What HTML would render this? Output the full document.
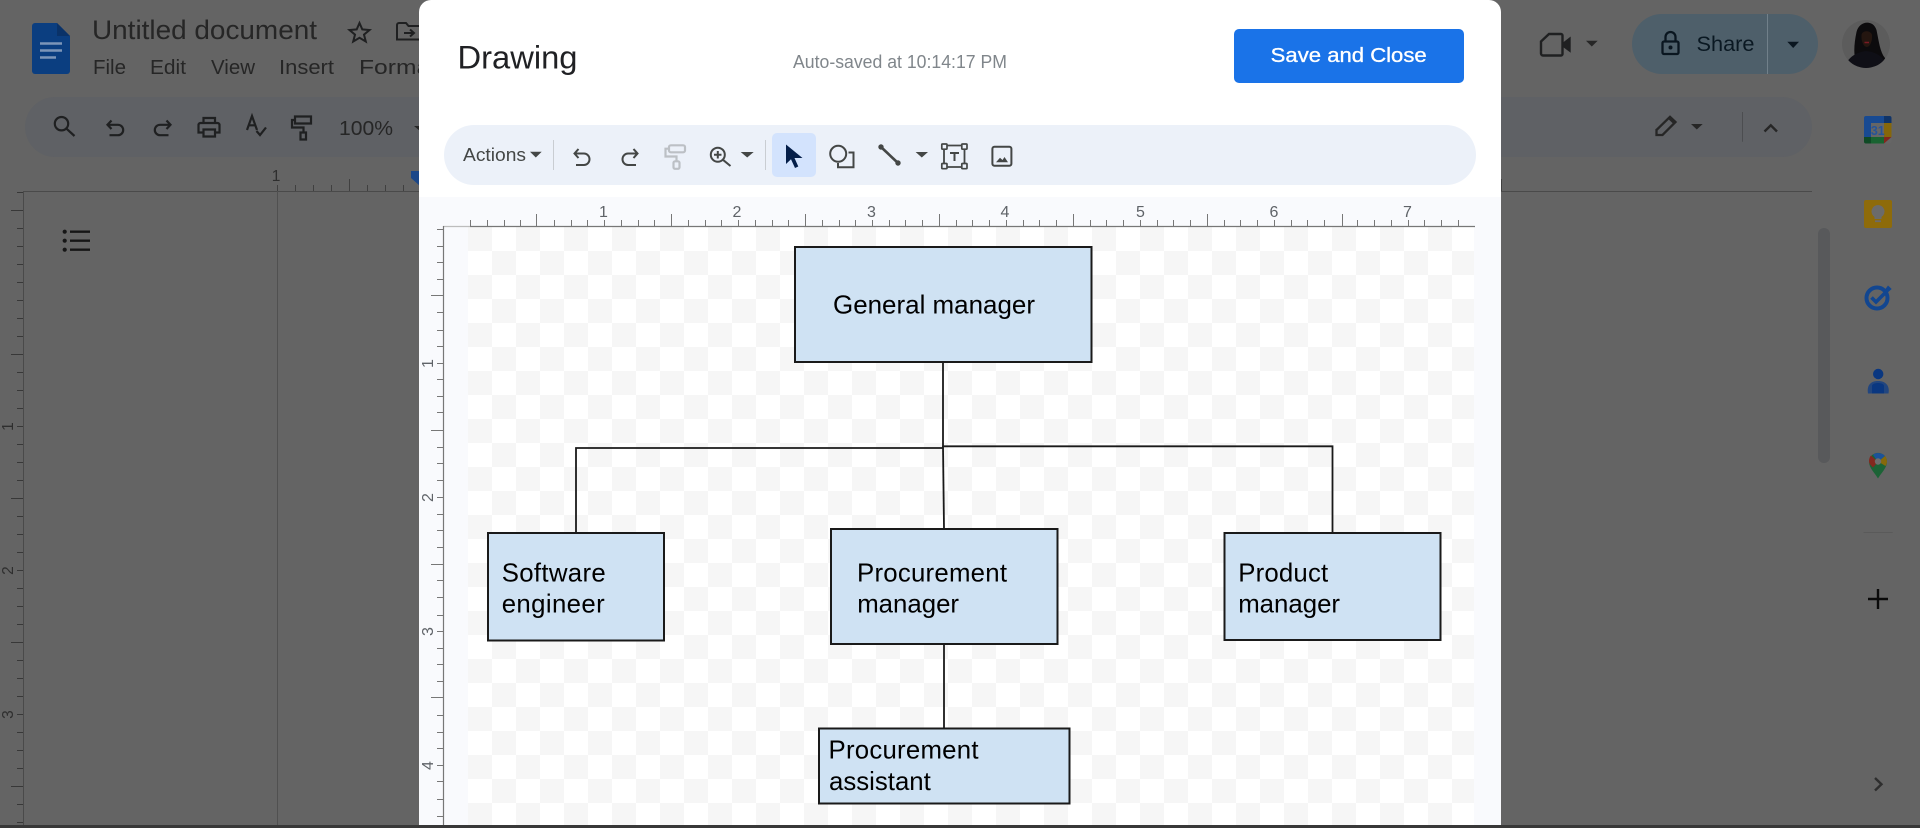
<!DOCTYPE html>
<html><head><meta charset="utf-8"><title>Drawing</title>
<style>
html,body{margin:0;padding:0;width:1920px;height:828px;overflow:hidden;background:#646464}
svg{display:block}
text{font-family:"Liberation Sans",Arial,sans-serif}
</style></head><body>
<svg width="1920" height="828" viewBox="0 0 1920 828" xmlns="http://www.w3.org/2000/svg">
<defs>
<pattern id="chk" patternUnits="userSpaceOnUse" x="468" y="227" width="48" height="48">
<rect width="48" height="48" fill="#fff"/><rect width="24" height="24" fill="#f6f6f6"/><rect x="24" y="24" width="24" height="24" fill="#f6f6f6"/>
</pattern>
<clipPath id="av"><circle cx="1866" cy="44" r="24"/></clipPath>
</defs>

<!-- background document -->
<rect width="1920" height="828" fill="#646464"/>
<path d="M35 23H57L70 36V71a3 3 0 0 1-3 3H35a3 3 0 0 1-3-3V26a3 3 0 0 1 3-3Z" fill="#0b3e80"/>
<path d="M57 23L70 36H57Z" fill="#0a3268"/>
<path d="M40 43.500H62M40 50.500H62M40 57.500H56" stroke="#7d95b8" stroke-width="2.400"/>
<text x="92" y="39" font-size="27" fill="#262626" textLength="225" lengthAdjust="spacingAndGlyphs">Untitled document</text>
<path d="M359.500 23L362.300 29.400 369.500 30 364 34.600 365.800 41.500 359.500 37.800 353.200 41.500 355 34.600 349.500 30 356.700 29.400Z" fill="none" stroke="#1f2021" stroke-width="2"/>
<path d="M397 39.500V25a2 2 0 0 1 2-2h7l2.500 3H425V39.500Z" fill="none" stroke="#1f2021" stroke-width="2"/>
<path d="M404 33H413M410 29.500L414 33 410 36.500" fill="none" stroke="#1f2021" stroke-width="2"/>
<g font-size="20" fill="#262626">
<text x="93" y="74" textLength="33" lengthAdjust="spacingAndGlyphs">File</text>
<text x="150" y="74" textLength="36" lengthAdjust="spacingAndGlyphs">Edit</text>
<text x="211" y="74" textLength="44" lengthAdjust="spacingAndGlyphs">View</text>
<text x="279" y="74" textLength="55" lengthAdjust="spacingAndGlyphs">Insert</text>
<text x="359" y="74" textLength="78" lengthAdjust="spacingAndGlyphs">Format</text>
</g>
<rect x="25" y="97" width="1787" height="60" rx="30" fill="#5f6165"/>
<g fill="none" stroke="#1f2021" stroke-width="2.200">
<circle cx="61.500" cy="123.700" r="6.700"/><path d="M66.500 128.700L74.500 136"/>
<path d="M111.500 120.500L107.500 124.800 111.500 129M107.500 124.800H118a5.200 5.200 0 0 1 0 10.400H109.500"/>
<path d="M166.500 120.500L170.500 124.800 166.500 129M170.500 124.800H160a5.200 5.200 0 0 0 0 10.400H168.500"/>
<path d="M203.500 123V118h11.500v5M203.500 132.500H198.500V125a2 2 0 0 1 2-2h17a2 2 0 0 1 2 2v7.500H215M203.500 129.500H215V136.500H203.500Z"/>
<path d="M247 130L252 116 257 130M248.800 125.300H255.200M256.500 131L260 135 266 127.500"/>
<path d="M295 116.500H311V123.500H295ZM295 120H292V127.500H303.500V132M300.500 132.500H306V139.500H300.500Z"/>
</g>
<text x="339" y="135" font-size="20.500" fill="#262626" textLength="54" lengthAdjust="spacingAndGlyphs">100%</text>
<path d="M414 126H420V131Z" fill="#262626"/>

<!-- doc rulers -->
<path d="M23.500 191.500H1812M23.500 191V825" stroke="#4a4a4a" stroke-width="1" fill="none"/>
<path d="M277.500 191V825" stroke="#505050" stroke-width="1"/>
<path d="M277.500 185v6M295.500 185v6M313.500 185v6M331.500 185v6M367.500 185v6M385.500 185v6M403.500 185v6M349.500 179v12M1501.500 179v12" stroke="#404040" stroke-width="1"/>
<text x="276" y="181" font-size="15.500" fill="#2e2e2e" text-anchor="middle">1</text>
<path d="M17 192.500h6M17 228.500h6M17 246.500h6M17 264.500h6M17 282.500h6M17 300.500h6M17 318.500h6M17 336.500h6M17 372.500h6M17 390.500h6M17 408.500h6M17 426.500h6M17 444.500h6M17 462.500h6M17 480.500h6M17 516.500h6M17 534.500h6M17 552.500h6M17 570.500h6M17 588.500h6M17 606.500h6M17 624.500h6M17 660.500h6M17 678.500h6M17 696.500h6M17 714.500h6M17 732.500h6M17 750.500h6M17 768.500h6M17 804.500h6M17 822.500h6M11 210.500h12M11 354.500h12M11 498.500h12M11 642.500h12M11 786.500h12" stroke="#383838" stroke-width="1"/>
<g font-size="15.500" fill="#2e2e2e" text-anchor="middle">
<text transform="translate(13 426.500) rotate(-90)">1</text>
<text transform="translate(13 570.500) rotate(-90)">2</text>
<text transform="translate(13 714.500) rotate(-90)">3</text>
</g>
<g fill="#161616"><circle cx="64.700" cy="231.700" r="2.100"/><circle cx="64.700" cy="240.700" r="2.100"/><circle cx="64.700" cy="249.700" r="2.100"/></g>
<path d="M70 231.700H90M70 240.700H90M70 249.700H90" stroke="#161616" stroke-width="2.400"/>
<rect x="411" y="171" width="9" height="7" fill="#1c4788"/>
<path d="M411 178H420V186Z" fill="#1c4788"/>

<!-- top right -->
<path d="M1541 41.500L1549 34H1561a1.500 1.500 0 0 1 1.500 1.500V54a1.500 1.500 0 0 1-1.500 1.500H1543a2 2 0 0 1-2-2Z" fill="none" stroke="#1f2021" stroke-width="2.400"/>
<path d="M1563 42.500L1570.700 36.500V52.700L1563 47Z" fill="#1f2021"/>
<path d="M1586 40.700H1597.700L1591.800 46.500Z" fill="#262626"/>
<rect x="1632" y="14" width="186" height="60" rx="30" fill="#4e5f6a"/>
<path d="M1767.500 14V74" stroke="#71808a" stroke-width="1"/>
<g fill="none" stroke="#0a1620" stroke-width="2.300">
<rect x="1662.500" y="41.500" width="16" height="12.500" rx="1.500"/>
<path d="M1665.500 41.500V37a5 5 0 0 1 10 0V41.500"/>
</g>
<circle cx="1670.500" cy="47.500" r="2" fill="#0a1620"/>
<text x="1696.500" y="51" font-size="21.500" fill="#0a1822" textLength="58" lengthAdjust="spacingAndGlyphs">Share</text>
<path d="M1787.300 41.700H1799L1793.200 48Z" fill="#0a1620"/>
<g clip-path="url(#av)">
<rect x="1842" y="20" width="48" height="48" fill="#5c5c5c"/>
<path d="M1857 66C1853 56 1854 44 1856.500 32 1859 21 1873 19 1876.500 30 1879 42 1880 52 1885 58V66Z" fill="#0c0b0d"/>
<path d="M1861.500 35C1862 30 1871 30 1872 35 1872.500 41 1870 47 1866.800 47 1863.500 47 1861 41 1861.500 35Z" fill="#241610"/>
<path d="M1864.500 42.500H1869" stroke="#7a1a24" stroke-width="1.400"/>
<path d="M1844 68C1848 56 1858 52 1866 51 1876 52 1884 56 1888 68Z" fill="#0f0f16"/>
</g>
<path d="M1657 129.500L1670 116.800 1675.500 122 1662.500 135H1656.500V129.800Z" fill="none" stroke="#262626" stroke-width="2.300"/>
<path d="M1668 118.800L1670.500 116.200 1676 121.600 1673.500 124Z" fill="#262626"/>
<path d="M1691 124H1702.700L1696.800 129.500Z" fill="#262626"/>
<path d="M1742.500 112V141.700" stroke="#4c4d50" stroke-width="1"/>
<path d="M1764.500 131.500L1770.800 125.300 1777 131.500" fill="none" stroke="#262626" stroke-width="2.400"/>

<!-- side panel -->
<rect x="1818" y="228" width="12" height="235" rx="6" fill="#58595b"/>
<rect x="1864" y="116" width="27.500" height="27.500" rx="2" fill="#666"/>
<path d="M1866 116H1884V123H1871V137H1864V118A2 2 0 0 1 1866 116Z" fill="#184a92"/>
<path d="M1884 116H1889.500A2 2 0 0 1 1891.500 118V123H1884Z" fill="#103468"/>
<path d="M1884 123H1891.500V137H1884Z" fill="#86670a"/>
<path d="M1871 137H1884V143.500H1871Z" fill="#196331"/>
<path d="M1864 137H1871V143.500H1866A2 2 0 0 1 1864 141.500Z" fill="#0f4a25"/>
<path d="M1884 137H1891.500L1884 143.500Z" fill="#82271e"/>
<text x="1877.800" y="135" font-size="12.500" font-weight="700" fill="#275498" text-anchor="middle">31</text>
<rect x="1864" y="200" width="28" height="28" rx="2" fill="#8e6b0a"/>
<path d="M1878 205a6.500 6.500 0 0 1 3.500 12V219H1874.500V217A6.500 6.500 0 0 1 1878 205Z" fill="#6b6b6b"/>
<path d="M1875 221.200H1881" stroke="#6b6b6b" stroke-width="1.800"/>
<circle cx="1877" cy="298" r="10.500" fill="none" stroke="#124690" stroke-width="4"/>
<path d="M1871.500 297.500L1876 302 1885 293" fill="none" stroke="#124690" stroke-width="3.600"/>
<path d="M1884 291L1888 285.500 1891.700 289 1886 294Z" fill="#124690"/>
<circle cx="1878.200" cy="374" r="5.200" fill="#0a3780"/>
<path d="M1868 393.500C1866.500 385 1871 381 1878 381 1885 381 1890 385 1888.500 393.500Z" fill="#22467f"/>
<path d="M1872 393.500V386C1872 382 1884 382 1884 386V393.500Z" fill="#0a3780"/>
<path d="M1878 478.500C1875 473 1869 468 1869 461.700A9 8.800 0 0 1 1887 461.700C1887 468 1881 473 1878 478.500Z" fill="#1c6336"/>
<path d="M1873 454.700A9 8.800 0 0 1 1885 456L1878 462Z" fill="#1c5299"/>
<path d="M1871 455.500L1878 462 1873 467.500C1870.500 465 1869 463.500 1869 461 1869 458.500 1870 456.500 1871 455.500Z" fill="#84281f"/>
<path d="M1878 462L1885 456C1886.300 457.500 1887 459.500 1887 461.700 1887 463 1886.500 464.500 1885.500 466L1879 462Z" fill="#86690b"/>
<circle cx="1878" cy="461.500" r="3.200" fill="#6e6e6e"/>
<path d="M1863.500 532.500H1892.700" stroke="#5a5a5a" stroke-width="1"/>
<path d="M1868 599H1888M1878 589V609" stroke="#0a0a0a" stroke-width="2.400"/>
<path d="M1875 778L1881.500 784.200 1875 790.500" fill="none" stroke="#2e2e2e" stroke-width="2.400"/>
<rect x="0" y="825" width="1920" height="3" fill="#383838"/>

<!-- dialog -->
<path d="M431 0H1489A12 12 0 0 1 1501 12V825H419V12A12 12 0 0 1 431 0Z" fill="#fff"/>
<rect x="419" y="197" width="1082" height="628" fill="#f9fafd"/>
<text x="457.500" y="68.300" font-size="32.500" fill="#202124" textLength="120" lengthAdjust="spacingAndGlyphs">Drawing</text>
<text x="793" y="67.800" font-size="18" fill="#80868b" textLength="214" lengthAdjust="spacingAndGlyphs">Auto-saved at 10:14:17 PM</text>
<rect x="1234" y="29" width="230" height="54" rx="5" fill="#1a73e8"/>
<text x="1270.700" y="62" font-size="20.500" fill="#fff" stroke="#fff" stroke-width=".35" textLength="156" lengthAdjust="spacingAndGlyphs">Save and Close</text>

<!-- dialog toolbar -->
<rect x="444" y="125" width="1032" height="60" rx="30" fill="#ecf1f9"/>
<text x="463" y="161" font-size="18" fill="#444746" textLength="63" lengthAdjust="spacingAndGlyphs">Actions</text>
<path d="M530 151.700H541.700L535.800 157.500Z" fill="#444746"/>
<path d="M553.500 140V170M765.500 140V170" stroke="#c9cdd2" stroke-width="1"/>
<g fill="none" stroke="#444746" stroke-width="2">
<path d="M578.500 149L574.500 153.500 578.500 158M574.500 153.500H584a5.500 5.750 0 0 1 0 11.500H576"/>
<path d="M633.500 149L637.500 153.500 633.500 158M637.500 153.500H628a5.500 5.750 0 0 0 0 11.500H636"/>
<circle cx="717.800" cy="154.700" r="7"/><path d="M722.800 159.700L730.500 166"/>
<path d="M717.800 151V158.500M714 154.700H721.500"/>
</g>
<g fill="none" stroke="#bcc0c5" stroke-width="2.200">
<rect x="669" y="145.300" width="16" height="7" rx="1.800"/>
<path d="M669 148.700H665.500V156.500H676.500V161"/>
<rect x="673.500" y="161.300" width="6" height="7.500" rx="1.500"/>
</g>
<path d="M740.700 152H753.700L747.200 157.500Z M915.600 152H928L921.800 157.500Z" fill="#444746"/>
<rect x="772" y="133" width="44" height="44" rx="5" fill="#d3e3fd"/>
<path d="M786 144.500V164L791 159.300 795 168 798.300 166.500 794.500 158H802.500Z" fill="#041e49"/>
<g fill="none" stroke="#444746" stroke-width="2">
<circle cx="838.200" cy="153.800" r="8"/>
<path d="M848.500 152.500H853.500V167.300H838V163"/>
<path d="M881 147L898 163" stroke-width="2.600"/>
<path d="M947.500 145.500H961M947.500 167H961M944 149V163.500M964.500 149V163.500" stroke-width="1.800"/>
<rect x="941.800" y="144" width="5.200" height="5.200" rx=".8" stroke-width="1.700"/>
<rect x="961.800" y="144" width="5.200" height="5.200" rx=".8" stroke-width="1.700"/>
<rect x="941.800" y="163.500" width="5.200" height="5.200" rx=".8" stroke-width="1.700"/>
<rect x="961.800" y="163.500" width="5.200" height="5.200" rx=".8" stroke-width="1.700"/>
<path d="M950 153H959M954.500 153V161" stroke-width="2"/>
<rect x="992.400" y="146.700" width="19" height="19" rx="2"/>
</g>
<circle cx="881" cy="147" r="2.700" fill="#444746"/><circle cx="898" cy="163" r="2.700" fill="#444746"/>
<path d="M996 162.300L1000 157.700 1002.500 160 1004.500 157 1008 162.300Z" fill="#444746"/>

<!-- canvas -->
<rect x="468" y="227" width="1006" height="598" fill="url(#chk)"/>

<!-- dialog rulers -->
<path d="M443 226.500H470" stroke="#bdbdbd" stroke-width="1.200"/>
<path d="M470 226.500H1475M443.500 226V825" stroke="#777" stroke-width="1.200" fill="none"/>
<path d="M470.500 220v6M487.500 220v6M504.500 220v6M520.500 220v6M554.500 220v6M571.500 220v6M587.500 220v6M604.500 220v6M621.500 220v6M638.500 220v6M654.500 220v6M688.500 220v6M705.500 220v6M721.500 220v6M738.500 220v6M755.500 220v6M772.500 220v6M788.500 220v6M822.500 220v6M839.500 220v6M855.500 220v6M872.500 220v6M889.500 220v6M905.500 220v6M922.500 220v6M956.500 220v6M972.500 220v6M989.500 220v6M1006.500 220v6M1023.500 220v6M1039.500 220v6M1056.500 220v6M1090.500 220v6M1106.500 220v6M1123.500 220v6M1140.500 220v6M1157.500 220v6M1173.500 220v6M1190.500 220v6M1224.500 220v6M1240.500 220v6M1257.500 220v6M1274.500 220v6M1291.500 220v6M1307.500 220v6M1324.500 220v6M1357.500 220v6M1374.500 220v6M1391.500 220v6M1408.500 220v6M1424.500 220v6M1441.500 220v6M1458.500 220v6M536.500 214v12M671.500 214v12M805.500 214v12M939.500 214v12M1073.500 214v12M1207.500 214v12M1342.500 214v12" stroke="#777" stroke-width="1"/>
<g font-size="16" fill="#5f6368" text-anchor="middle">
<text x="603.500" y="217">1</text><text x="737" y="217">2</text><text x="871.500" y="217">3</text><text x="1005" y="217">4</text><text x="1140.500" y="217">5</text><text x="1274" y="217">6</text><text x="1407.500" y="217">7</text>
</g>
<path d="M437 229.500h6M437 246.500h6M437 262.500h6M437 279.500h6M437 312.500h6M437 330.500h6M437 346.500h6M437 363.500h6M437 379.500h6M437 396.500h6M437 412.500h6M437 447.500h6M437 463.500h6M437 480.500h6M437 497.500h6M437 514.500h6M437 530.500h6M437 547.500h6M437 580.500h6M437 597.500h6M437 615.500h6M437 631.500h6M437 648.500h6M437 664.500h6M437 681.500h6M437 715.500h6M437 732.500h6M437 748.500h6M437 765.500h6M437 781.500h6M437 799.500h6M437 816.500h6M431 295.500h12M431 430.500h12M431 564.500h12M431 697.500h12" stroke="#777" stroke-width="1"/>
<g font-size="16" fill="#5f6368" text-anchor="middle">
<text transform="translate(433 363.500) rotate(-90)">1</text>
<text transform="translate(433 497.500) rotate(-90)">2</text>
<text transform="translate(433 631.500) rotate(-90)">3</text>
<text transform="translate(433 765.500) rotate(-90)">4</text>
</g>

<!-- diagram -->
<g fill="none" stroke="#1a1a1a" stroke-width="1.800">
<path d="M943 362V447.500"/>
<path d="M576 532.500V448H943"/>
<path d="M943 446.300H1332.500V532.500"/>
<path d="M943 446L944 528.500"/>
<path d="M944 644.500V728.500"/>
</g>
<g fill="#cfe2f3" stroke="#1a1a1a" stroke-width="2">
<rect x="795" y="247" width="296.500" height="115"/>
<rect x="488" y="533" width="176" height="107.500"/>
<rect x="831" y="529" width="226.500" height="115"/>
<rect x="1224.500" y="533" width="216" height="107"/>
<rect x="819" y="728.500" width="250.500" height="75"/>
</g>
<g font-size="25.800" fill="#000">
<text x="833" y="313.700" textLength="202" lengthAdjust="spacingAndGlyphs">General manager</text>
<text x="501.700" y="581.700" textLength="104">Software</text>
<text x="501.700" y="612.500" textLength="103">engineer</text>
<text x="857" y="581.700" textLength="150">Procurement</text>
<text x="857.200" y="612.500">manager</text>
<text x="1238.200" y="581.700" textLength="90">Product</text>
<text x="1238.200" y="612.500">manager</text>
<text x="828.500" y="758.700" textLength="150">Procurement</text>
<text x="829" y="790">assistant</text>
</g>
</svg>
</body></html>
